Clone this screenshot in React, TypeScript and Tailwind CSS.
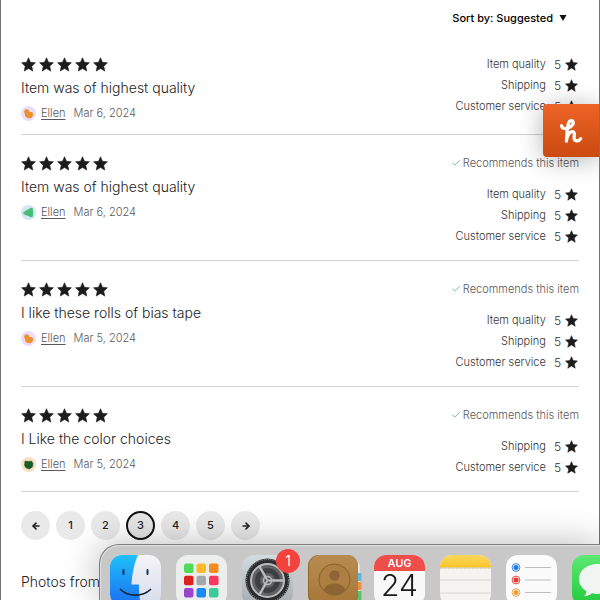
import React from "react";
import { ArrowLeft, ArrowRight, Check } from "lucide-react";

const reviews = [
  {
    title: "Item was of highest quality",
    date: "Mar 6, 2024",
    avatar: "orange",
    recommends: false,
    ratings: ["Item quality", "Shipping", "Customer service"],
  },
  {
    title: "Item was of highest quality",
    date: "Mar 6, 2024",
    avatar: "green",
    recommends: true,
    ratings: ["Item quality", "Shipping", "Customer service"],
  },
  {
    title: "I like these rolls of bias tape",
    date: "Mar 5, 2024",
    avatar: "orange",
    recommends: true,
    ratings: ["Item quality", "Shipping", "Customer service"],
  },
  {
    title: "I Like the color choices",
    date: "Mar 5, 2024",
    avatar: "dark",
    recommends: true,
    ratings: ["Shipping", "Customer service"],
  },
];

const launchpadColors = [
  "#4fdb57", "#fdbb2b", "#f78a1d",
  "#d9231c", "#a3a9ab", "#f9385e",
  "#9a45cf", "#1a8af5", "#37cc98",
];

function Star({ className }: any) {
  return (
    <svg viewBox="0 0 20 20" className={className} aria-hidden="true">
      <path
        d="M10 1l2.600 6 6.600.7-4.900 4.500 1.400 6.600L10 15.300l-5.700 3.500 1.400-6.600L.8 7.700 7.400 7z"
        fill="#1c1c1c"
        stroke="#1c1c1c"
        strokeWidth=".8"
        strokeLinejoin="round"
      />
    </svg>
  );
}

function Avatar({ kind }: any) {
  return (
    <svg viewBox="0 0 30 30" className="size-[15px] shrink-0" aria-hidden="true">
      {kind === "orange" && (
        <>
          <circle cx="15" cy="15" r="15" fill="#ebdcf8" />
          <path d="M7 9c2-4 7-3 9 0 1 2 1 3 3 3 4-1 6 3 5 7-2 6-8 7-13 4-3-2-3-5-3-7-2-2-2-5-1-7z" fill="#ec912f" />
        </>
      )}
      {kind === "green" && (
        <>
          <circle cx="15" cy="15" r="15" fill="#d2e6f3" />
          <path d="M19 6c3-1 5 1 5 4v11c0 3-2 4-5 3L7 19c-4-2-4-4 0-6z" fill="#49bd71" />
        </>
      )}
      {kind === "dark" && (
        <>
          <circle cx="15" cy="15" r="15" fill="#fadfc3" />
          <path d="M8 8l7 1 6-1 3 5-1 7-6 4-7-2-3-5z" fill="#165c2b" stroke="#165c2b" strokeWidth="1" strokeLinejoin="round" />
        </>
      )}
    </svg>
  );
}

function Review({ title, date, avatar, recommends, ratings }: any) {
  return (
    <li className="flex justify-between border-b border-[#d2d2d2] pt-[18px] pb-[13px]">
      <div>
        <div className="flex h-5 items-center gap-[3px]" role="img" aria-label="5 out of 5 stars">
          {[1, 2, 3, 4, 5].map((n) => (
            <Star key={n} className="size-[15px]" />
          ))}
        </div>
        <p className="mt-1 text-sm leading-5 font-light text-[#222222]">{title}</p>
        <div className="mt-[7px] flex h-4 items-center text-[11px] leading-4 font-light text-[#595959]">
          <Avatar kind={avatar} />
          <a href="#reviews" className="ml-[5px] underline underline-offset-2">Ellen</a>
          <span className="ml-2">{date}</span>
        </div>
      </div>
      <div className="flex flex-col items-end text-[11px] font-light">
        {recommends && (
          <p className="mb-[11px] flex h-5 items-center gap-[2px] text-[#595959]">
            <Check className="size-[10px] text-[#4fb28c]" strokeWidth={2} />
            Recommends this item
          </p>
        )}
        <ul className="text-[#333333]">
          {ratings.map((label: string) => (
            <li key={label} className="flex items-center justify-end pr-px leading-[21px]">
              <span>{label}</span>
              <span className="ml-2 text-xs leading-[21px]">5</span>
              <Star className="ml-1 size-[13px]" />
            </li>
          ))}
        </ul>
      </div>
    </li>
  );
}

function Pagination() {
  return (
    <nav aria-label="Reviews pages" className="mt-[19px] flex gap-[6px]">
      <button type="button" aria-label="Previous page" className="flex size-[29px] items-center justify-center rounded-full bg-[#e9e9e9]">
        <ArrowLeft className="size-[10px]" strokeWidth={4} />
      </button>
      {[1, 2, 3, 4, 5].map((page) => (
        <button
          key={page}
          type="button"
          aria-current={page === 3 ? "page" : undefined}
          className={
            page === 3
              ? "size-[29px] rounded-full border-2 border-[#111111] bg-[#e6e6e6] text-[11px] font-medium"
              : "size-[29px] rounded-full bg-[#e9e9e9] text-[11px] font-medium"
          }
        >
          {page}
        </button>
      ))}
      <button type="button" aria-label="Next page" className="flex size-[29px] items-center justify-center rounded-full bg-[#e9e9e9]">
        <ArrowRight className="size-[10px]" strokeWidth={4} />
      </button>
    </nav>
  );
}

function HoneyButton() {
  return (
    <button
      type="button"
      aria-label="Honey"
      className="absolute top-[104px] right-0 flex h-[53px] w-14 items-center justify-center rounded-l bg-linear-to-b from-[#ed6425] to-[#cb4a0f] shadow-[0_3px_24px_rgba(0,0,0,0.3)]"
    >
      <svg viewBox="0 0 24 26" className="h-[26px] w-6" fill="none" stroke="#fff" strokeWidth="3.2" strokeLinecap="round" strokeLinejoin="round" aria-hidden="true">
        <path d="M2.600 7.600C2.600 10.500 6 11.200 9.400 9.900c3.600-1.400 5.400-4.300 4.700-6.200-.8-1.900-3.700-1.500-4.700 1.800C8.200 9.600 8 16 7.400 23.200c.7-5.200 3-9.600 6-9.600 2.800 0 1.800 3.400 1.700 6.100-.1 3.900 4.500 4.300 6.600.9" />
      </svg>
    </button>
  );
}

function FinderIcon() {
  return (
    <svg viewBox="0 0 51 51" className="size-[51px]" aria-hidden="true">
      <defs>
        <linearGradient id="finderBlue" x1="0" y1="0" x2="0" y2="1">
          <stop offset="0" stopColor="#20c0fa" />
          <stop offset="1" stopColor="#1a6df2" />
        </linearGradient>
        <linearGradient id="finderWhite" x1="0" y1="0" x2="0" y2="1">
          <stop offset="0" stopColor="#f5f4f8" />
          <stop offset="1" stopColor="#d5dcea" />
        </linearGradient>
        <clipPath id="finderClip">
          <rect width="51" height="51" rx="12" />
        </clipPath>
      </defs>
      <g clipPath="url(#finderClip)">
        <rect width="51" height="51" fill="url(#finderWhite)" />
        <path d="M0 0h28c-3 7-5.500 15-6.500 29.500H29c-.2 7 .4 14 2 21.500H0z" fill="url(#finderBlue)" />
        <path d="M13.500 15v4M37.500 15v4" stroke="#18334e" strokeWidth="2" strokeLinecap="round" />
        <path d="M10.500 34.500c8 7.500 22 7.500 30 0" fill="none" stroke="#13263c" strokeWidth="1.700" strokeLinecap="round" />
      </g>
    </svg>
  );
}

function LaunchpadIcon() {
  return (
    <svg viewBox="0 0 51 51" className="size-[51px]" aria-hidden="true">
      <rect width="51" height="51" rx="12" fill="#eceded" />
      {launchpadColors.map((color, i) => (
        <rect key={color} x={8 + (i % 3) * 12.5} y={8.5 + Math.floor(i / 3) * 12.3} width="9.500" height="9.500" rx="2" fill={color} />
      ))}
    </svg>
  );
}

function SettingsIcon() {
  return (
    <svg viewBox="0 0 51 51" className="size-[51px]" aria-hidden="true">
      <defs>
        <linearGradient id="settingsBg" x1="0" y1="0" x2="0" y2="1">
          <stop offset="0" stopColor="#d3dcdf" />
          <stop offset="1" stopColor="#a5aaad" />
        </linearGradient>
      </defs>
      <rect width="51" height="51" rx="12" fill="url(#settingsBg)" />
      <circle cx="25.500" cy="25.500" r="22" fill="#2a2c2e" />
      <circle cx="25.500" cy="25.500" r="21" fill="none" stroke="#85898b" strokeWidth="1.200" strokeDasharray="1 1.200" />
      <circle cx="25.500" cy="25.500" r="16.500" fill="#5f6163" stroke="#b9bcbe" strokeWidth="2" />
      <circle cx="25.500" cy="25.500" r="10" fill="none" stroke="#3d3f41" strokeWidth="5" />
      <path d="M25.500 25.500H42M25.500 25.500l-8.200-14.300M25.500 25.500l-8.200 14.300" stroke="#b9bcbe" strokeWidth="2.400" strokeLinecap="round" />
      <circle cx="25.500" cy="25.500" r="4" fill="#55575a" stroke="#b9bcbe" strokeWidth="1.600" />
      <path d="M25.500 25.500H30M25.500 25.500l-2.300-4M25.500 25.500l-2.300 4" stroke="#b9bcbe" strokeWidth="1.800" />
    </svg>
  );
}

function ContactsIcon() {
  return (
    <svg viewBox="0 0 54 51" className="h-[51px] w-[54px]" aria-hidden="true">
      <defs>
        <linearGradient id="contactsBg" x1="0" y1="0" x2="0" y2="1">
          <stop offset="0" stopColor="#b88b50" />
          <stop offset="1" stopColor="#a57739" />
        </linearGradient>
      </defs>
      <rect x="6" y="3" width="46" height="48" rx="9" fill="#e8e5df" />
      <rect x="48" y="18" width="5.500" height="8" rx="1" fill="#5bb8df" />
      <rect x="48" y="27" width="5.500" height="8" rx="1" fill="#f1913b" />
      <rect x="48" y="36" width="5.500" height="9" rx="1" fill="#58c568" />
      <rect width="50" height="51" rx="11" fill="#92672f" />
      <rect x="1" width="49" height="50" rx="11" fill="url(#contactsBg)" />
      <circle cx="26.500" cy="24.500" r="15.500" fill="#ad7f43" stroke="#865f2d" strokeWidth="1" />
      <circle cx="26.500" cy="20.500" r="5.200" fill="#8d6432" />
      <path d="M15.500 35c2-5 6-6.500 11-6.500s9 1.500 11 6.500c-3 3.500-7 5-11 5s-8-1.500-11-5z" fill="#8d6432" />
    </svg>
  );
}

function CalendarIcon() {
  return (
    <div className="h-[51px] w-[51px] rounded-xl bg-[#f8f8f8] text-center">
      <div className="h-4 rounded-t-xl bg-[#ee4e49] text-[11px] leading-4 font-semibold text-white">AUG</div>
      <div className="text-[30px] leading-7 font-light text-[#1b1b1b]">24</div>
    </div>
  );
}

function NotesIcon() {
  return (
    <svg viewBox="0 0 51 51" className="size-[51px]" aria-hidden="true">
      <defs>
        <clipPath id="notesClip">
          <rect width="51" height="51" rx="12" />
        </clipPath>
        <linearGradient id="notesTop" x1="0" y1="0" x2="0" y2="1">
          <stop offset="0" stopColor="#fcd75c" />
          <stop offset="1" stopColor="#f8c42a" />
        </linearGradient>
      </defs>
      <g clipPath="url(#notesClip)">
        <rect width="51" height="51" fill="#f5f4f1" />
        <rect width="51" height="12.500" fill="url(#notesTop)" />
        <path d="M0 13h51" stroke="#b5a98a" strokeWidth="1" strokeDasharray="1 .6" />
        <path d="M0 25h51M0 38h51" stroke="#d5d4d1" strokeWidth="1" />
      </g>
    </svg>
  );
}

function RemindersIcon() {
  return (
    <svg viewBox="0 0 51 51" className="size-[51px]" aria-hidden="true">
      <rect width="51" height="51" rx="12" fill="#fbfbfb" />
      {["#2079e6", "#e03a35", "#ee9a35"].map((color, i) => (
        <g key={color}>
          <circle cx="10" cy={12.5 + i * 12.5} r="3.900" fill="none" stroke={color} strokeWidth=".9" />
          <circle cx="10" cy={12.5 + i * 12.5} r="2.500" fill={color} />
          <path d={`M19 ${12.5 + i * 12.5}h26`} stroke="#bcbcbc" strokeWidth="1" />
        </g>
      ))}
    </svg>
  );
}

function MessagesIcon() {
  return (
    <svg viewBox="0 0 51 51" className="size-[51px]" aria-hidden="true">
      <defs>
        <linearGradient id="messagesBg" x1="0" y1="0" x2="0" y2="1">
          <stop offset="0" stopColor="#5ee873" />
          <stop offset="1" stopColor="#22c93c" />
        </linearGradient>
      </defs>
      <rect width="51" height="51" rx="12" fill="url(#messagesBg)" />
      <path d="M25.500 9C15 9 7 15.500 7 24c0 5.200 3 9.500 7.500 12.200 0 2-1 3.600-2.500 5 3.200-.2 6-1.200 8-3 1.800.5 3.600.7 5.500.7C36 38.900 44 32.500 44 24S36 9 25.500 9z" fill="#f1f5f1" />
    </svg>
  );
}

function Dock() {
  return (
    <div className="fixed right-0 bottom-0 left-[99px] h-14 rounded-tl-[20px] border-t border-l border-[#7e7e7e] bg-[#c8c8c8] shadow-[0_0_36px_rgba(0,0,0,0.28),inset_1px_1px_0_#dedede]">
      <div className="flex h-full gap-[15px] overflow-hidden pt-[10px] pl-[10px]">
        <div className="shrink-0"><FinderIcon /></div>
        <div className="shrink-0"><LaunchpadIcon /></div>
        <div className="relative shrink-0">
          <SettingsIcon />
          <span className="absolute -top-[6px] -right-[7px] flex size-6 items-center justify-center rounded-full bg-[#f4433e] text-sm text-white">1</span>
        </div>
        <div className="w-[51px] shrink-0"><ContactsIcon /></div>
        <div className="shrink-0"><CalendarIcon /></div>
        <div className="shrink-0"><NotesIcon /></div>
        <div className="shrink-0"><RemindersIcon /></div>
        <div className="shrink-0"><MessagesIcon /></div>
      </div>
    </div>
  );
}

export default function App() {
  return (
    <div className="relative min-h-screen overflow-hidden border-x border-[#77716f] bg-white px-5 font-[Inter,sans-serif] text-[#222222]">
      <div className="flex h-9 items-center justify-end pr-3">
        <button type="button" aria-haspopup="menu" className="flex items-center gap-[6px] text-[11px] leading-4 font-medium text-black">
          Sort by: Suggested
          <svg viewBox="0 0 8 6" className="h-[6px] w-2" aria-hidden="true">
            <path d="M.5 0h7L4 6z" fill="#111" />
          </svg>
        </button>
      </div>
      <ul id="reviews">
        {reviews.map((review, i) => (
          <Review key={i} {...review} />
        ))}
      </ul>
      <Pagination />
      <h2 className="mt-8 text-sm leading-5 font-light">Photos from</h2>
      <HoneyButton />
      <Dock />
    </div>
  );
}
